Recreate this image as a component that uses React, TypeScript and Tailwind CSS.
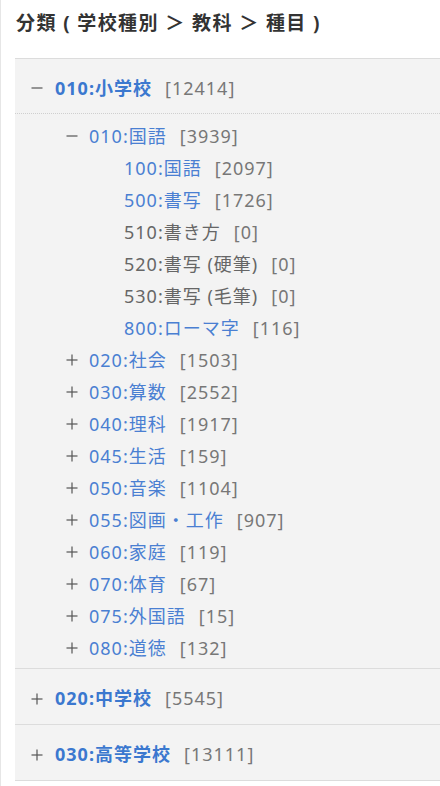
import React from "react";

type Leaf = { code: string; name: string; count: number };
type Subject = { code: string; name: string; count: number; open?: boolean; items?: Leaf[] };
type School = { code: string; name: string; count: number; open?: boolean; subjects?: Subject[] };

const data: School[] = [
  {
    code: "010",
    name: "小学校",
    count: 12414,
    open: true,
    subjects: [
      {
        code: "010",
        name: "国語",
        count: 3939,
        open: true,
        items: [
          { code: "100", name: "国語", count: 2097 },
          { code: "500", name: "書写", count: 1726 },
          { code: "510", name: "書き方", count: 0 },
          { code: "520", name: "書写 (硬筆)", count: 0 },
          { code: "530", name: "書写 (毛筆)", count: 0 },
          { code: "800", name: "ローマ字", count: 116 },
        ],
      },
      { code: "020", name: "社会", count: 1503 },
      { code: "030", name: "算数", count: 2552 },
      { code: "040", name: "理科", count: 1917 },
      { code: "045", name: "生活", count: 159 },
      { code: "050", name: "音楽", count: 1104 },
      { code: "055", name: "図画・工作", count: 907 },
      { code: "060", name: "家庭", count: 119 },
      { code: "070", name: "体育", count: 67 },
      { code: "075", name: "外国語", count: 15 },
      { code: "080", name: "道徳", count: 132 },
    ],
  },
  { code: "020", name: "中学校", count: 5545 },
  { code: "030", name: "高等学校", count: 13111 },
];

// 開閉マーク（＋ / －）
function Sign({ open }: { open: boolean }) {
  return (
    <svg width="12" height="12" viewBox="0 0 12 12" className="shrink-0">
      <line x1="0.5" y1="6" x2="11.5" y2="6" stroke="#555" strokeWidth="1.2" />
      {!open && <line x1="6" y1="0.5" x2="6" y2="11.5" stroke="#555" strokeWidth="1.2" />}
    </svg>
  );
}

function Count({ n }: { n: number }) {
  return <span className="ml-[13px] text-[#777]">[{n}]</span>;
}

export default function App() {
  return (
    <div
      className="min-h-[786px] border-l border-[#e6e6e6] bg-white text-[#333]"
      style={{ fontFamily: '"Noto Sans", "Noto Sans CJK JP", sans-serif' }}
    >
      <h2 className="pl-[15px] pt-[9px] pb-[21px] text-[19px] font-bold leading-[28px] tracking-[1.4px] text-[#333]">
        分類 ( 学校種別 ＞ 教科 ＞ 種目 )
      </h2>

      <div className="ml-[14px] border-t border-[#dcdcdc] bg-[#f3f3f3] text-[18px] tracking-[1px]">
        {data.map((s) => (
          <div key={s.code} className="border-b border-[#dcdcdc]">
            <div
              className={`flex h-[55px] items-center pl-[16px] pt-[4px] ${
                s.open ? "border-b border-dotted border-[#cfcfcf]" : ""
              }`}
            >
              <Sign open={!!s.open} />
              <span className="ml-[12px] font-bold text-[#3b78cf]">
                {s.code}:{s.name}
              </span>
              <Count n={s.count} />
            </div>

            {s.open && s.subjects && (
              <ul className="pt-[4px] pb-[6px]">
                {s.subjects.map((sub) => (
                  <li key={sub.code}>
                    <div className="flex h-[32px] items-center pl-[51px] pt-[4px]">
                      <Sign open={!!sub.open} />
                      <span className="ml-[11px] text-[#4a7fd2]">
                        {sub.code}:{sub.name}
                      </span>
                      <Count n={sub.count} />
                    </div>
                    {sub.open &&
                      sub.items?.map((it) => (
                        <div key={it.code} className="flex h-[32px] items-center pl-[109px] pt-[4px]">
                          <span className={it.count > 0 ? "text-[#4a7fd2]" : "text-[#666]"}>
                            {it.code}:{it.name}
                          </span>
                          <Count n={it.count} />
                        </div>
                      ))}
                  </li>
                ))}
              </ul>
            )}
          </div>
        ))}
      </div>
    </div>
  );
}
